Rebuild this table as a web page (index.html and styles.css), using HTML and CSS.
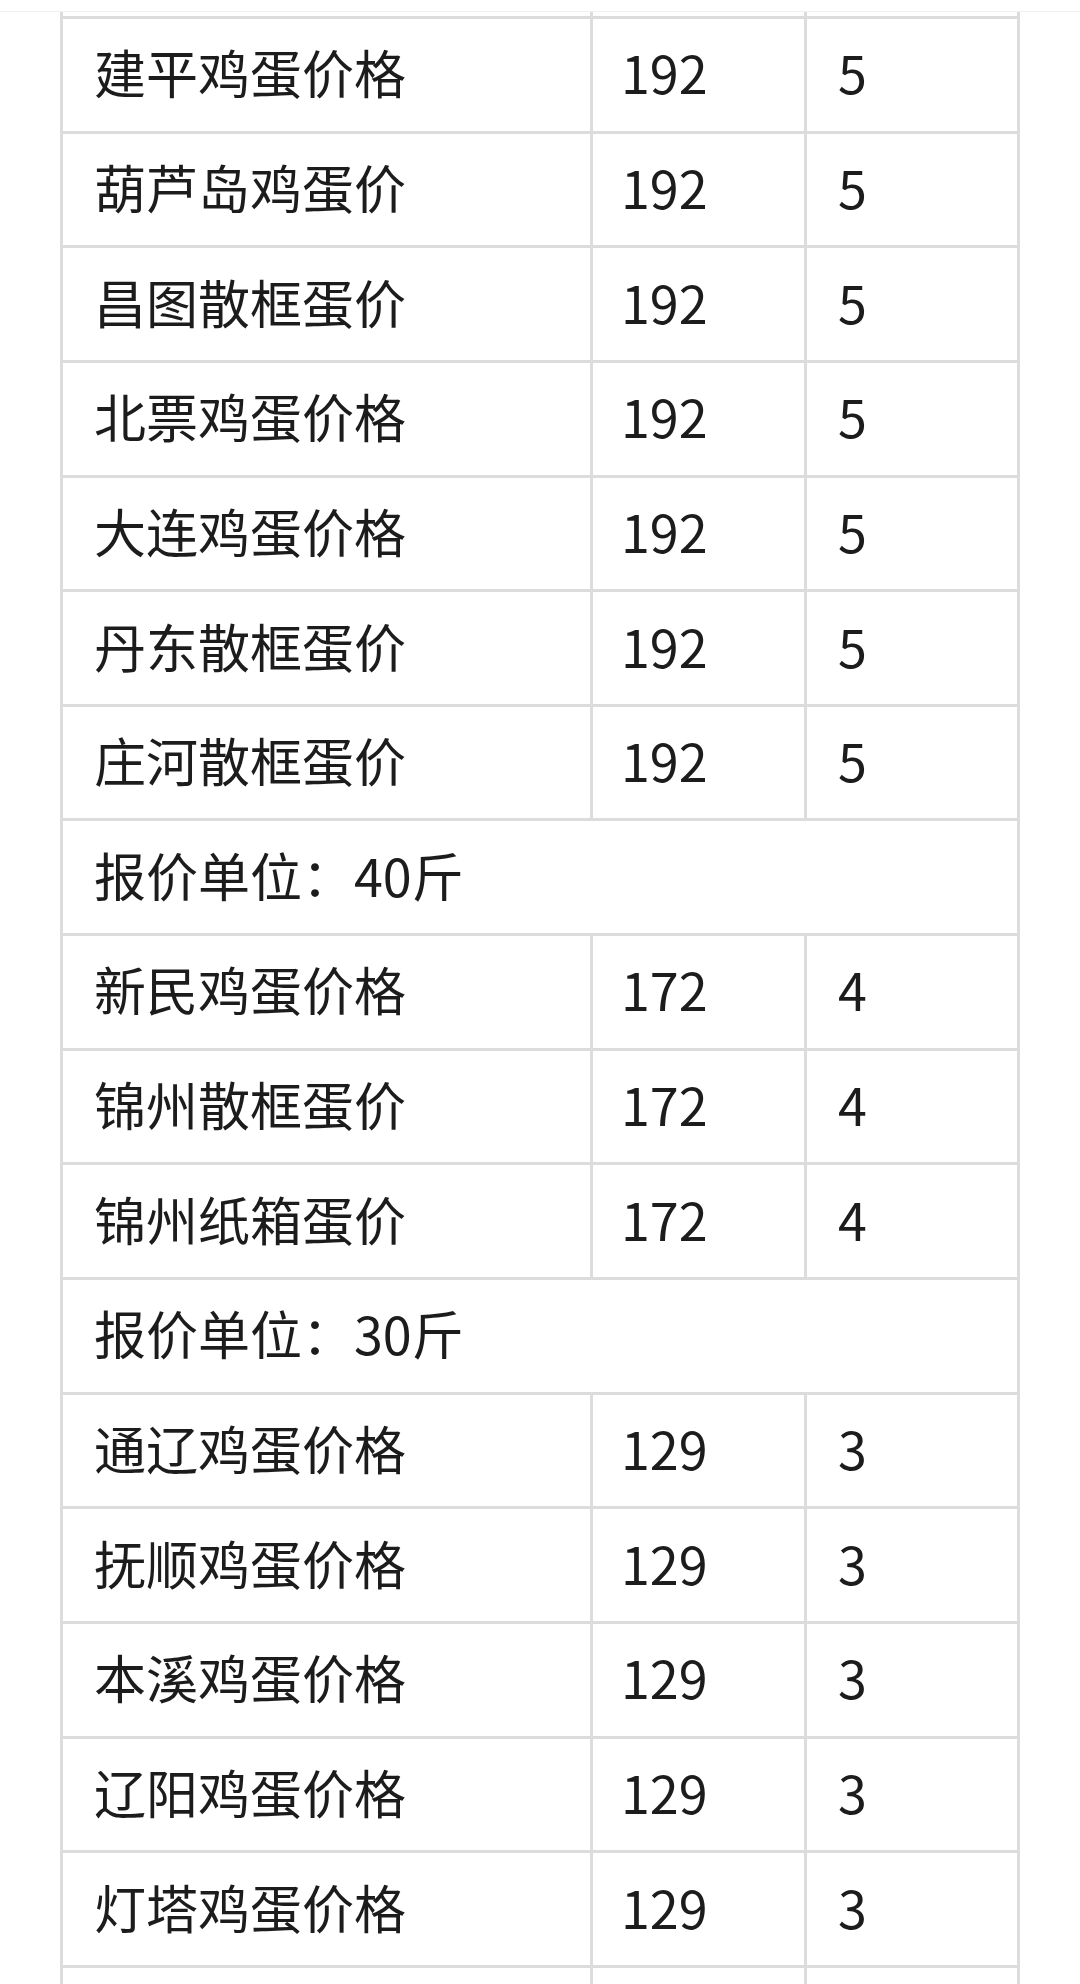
FILE: index.html
```html
<!DOCTYPE html>
<html lang="zh-CN">
<head>
<meta charset="utf-8">
<title>鸡蛋价格</title>
<link rel="stylesheet" href="styles.css">
</head>
<body>
<div class="topbar"></div>
<div class="page">
  <div class="grid">
    <div class="cell"></div><div class="cell"></div><div class="cell"></div>
    <div class="cell">建平鸡蛋价格</div><div class="cell num">192</div><div class="cell">5</div>
    <div class="cell">葫芦岛鸡蛋价</div><div class="cell num">192</div><div class="cell">5</div>
    <div class="cell">昌图散框蛋价</div><div class="cell num">192</div><div class="cell">5</div>
    <div class="cell">北票鸡蛋价格</div><div class="cell num">192</div><div class="cell">5</div>
    <div class="cell">大连鸡蛋价格</div><div class="cell num">192</div><div class="cell">5</div>
    <div class="cell">丹东散框蛋价</div><div class="cell num">192</div><div class="cell">5</div>
    <div class="cell">庄河散框蛋价</div><div class="cell num">192</div><div class="cell">5</div>
    <div class="cell span">报价单位：40斤</div>
    <div class="cell">新民鸡蛋价格</div><div class="cell num">172</div><div class="cell">4</div>
    <div class="cell">锦州散框蛋价</div><div class="cell num">172</div><div class="cell">4</div>
    <div class="cell">锦州纸箱蛋价</div><div class="cell num">172</div><div class="cell">4</div>
    <div class="cell span">报价单位：30斤</div>
    <div class="cell">通辽鸡蛋价格</div><div class="cell num">129</div><div class="cell">3</div>
    <div class="cell">抚顺鸡蛋价格</div><div class="cell num">129</div><div class="cell">3</div>
    <div class="cell">本溪鸡蛋价格</div><div class="cell num">129</div><div class="cell">3</div>
    <div class="cell">辽阳鸡蛋价格</div><div class="cell num">129</div><div class="cell">3</div>
    <div class="cell">灯塔鸡蛋价格</div><div class="cell num">129</div><div class="cell">3</div>
    <div class="cell"></div><div class="cell"></div><div class="cell"></div>
  </div>
</div>
</body>
</html>
```
FILE: styles.css
```css
html, body {
  margin: 0;
  padding: 0;
  background: #ffffff;
}
body {
  width: 1080px;
  height: 1984px;
  overflow: hidden;
  font-family: "Noto Sans CJK SC", "Noto Sans", sans-serif;
  color: #1c1c1c;
}
.topbar {
  position: fixed;
  top: 0;
  left: 0;
  right: 0;
  height: 11px;
  background: #ffffff;
  border-bottom: 1px solid #f0f0f0;
  z-index: 2;
}
.page {
  padding-left: 60px;
}
.grid {
  display: grid;
  grid-template-columns: 527px 211px 210px;
  grid-auto-rows: 111.65px;
  gap: 3px;
  padding: 3px;
  width: 954px;
  background: #dcdcdc;
  margin-top: -98.65px;
}
.cell {
  background: #ffffff;
  display: flex;
  align-items: center;
  padding-left: 31px;
  padding-bottom: 5px;
  box-sizing: border-box;
  font-size: 52px;
  line-height: 1;
  white-space: nowrap;
}
.num {
  padding-left: 28px;
}
.span {
  grid-column: 1 / -1;
}
```
